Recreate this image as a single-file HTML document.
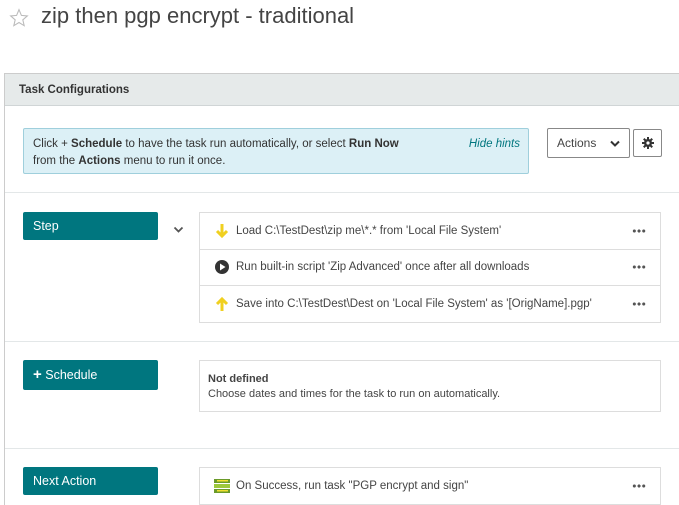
<!DOCTYPE html>
<html style="width:679px;height:505px;overflow:hidden"><head><style>
*{box-sizing:border-box;margin:0;padding:0}
body{width:679px;height:505px;overflow:hidden;background:#fff;font-family:"Liberation Sans",sans-serif;color:#333;position:relative;font-size:12px}
.a{position:absolute}
.btn{position:absolute;left:23px;width:135px;background:#00767f;color:#fff;font-size:12.5px;border-radius:2px;padding-left:10px}
.box{position:absolute;left:199px;width:462px;border:1px solid #ddd;background:#fff}
.row{height:36.5px;display:flex;align-items:center;padding-left:14px;font-size:11.5px;color:#444;position:relative}
.dots{position:absolute;right:14px;top:50%;margin-top:-2px;width:14px;height:4px;background:radial-gradient(circle,#555 1.5px,transparent 1.7px) 0 0/4.7px 4px repeat-x}
.hr{position:absolute;left:5px;width:674px;height:1px;background:#e3e7e8}
</style></head><body>
<svg class="a" style="left:9px;top:8px" width="20" height="20" viewBox="0 0 24 24"><path d="M12 2l2.9 6.9 7.1.6-5.4 4.7 1.6 7-6.2-3.8-6.2 3.8 1.6-7L2 9.5l7.1-.6z" fill="none" stroke="#bbb" stroke-width="1.3"/></svg>
<div class="a" style="left:41px;top:3px;font-size:22px;color:#444">zip then pgp encrypt - traditional</div>
<div class="a" style="left:4px;top:73px;width:675px;height:432px;border-left:1px solid #ccc;border-top:1px solid #ccc"></div>
<div class="a" style="left:5px;top:74px;width:674px;height:32px;background:#e6eaea;border-bottom:1px solid #d0d5d6;font-weight:bold;font-size:11.5px;padding:10px 0 0 14px;color:#333">Task Configurations</div>
<div class="a" style="left:23px;top:128px;width:506px;height:46px;background:#dcf0f6;border:1px solid #9fcfdc;border-radius:2px;padding:7px 0 0 9px;font-size:11.5px;line-height:17px;color:#333">Click + <b>Schedule</b> to have the task run automatically, or select <b>Run Now</b><br>from the <b>Actions</b> menu to run it once.<span class="a" style="right:8px;top:7px;color:#00767f;font-style:italic">Hide hints</span></div>
<div class="a" style="left:547px;top:128px;width:83px;height:30px;border:1px solid #888;border-radius:2px;padding:7px 0 0 9px;font-size:12px;color:#444">Actions <svg style="position:absolute;left:62px;top:11px" width="10" height="8" viewBox="0 0 10 8"><path d="M1 1.5l4 4 4-4" fill="none" stroke="#333" stroke-width="2"/></svg></div>
<div class="a" style="left:633px;top:129px;width:29px;height:28px;border:1px solid #888;border-radius:2px"><svg style="position:absolute;left:8px;top:7px" width="12" height="12" viewBox="0 0 12 12"><g fill="#333"><circle cx="6" cy="6" r="4"/><rect x="5" y="0" width="2" height="12"/><rect x="0" y="5" width="12" height="2"/><rect x="5" y="0" width="2" height="12" transform="rotate(45 6 6)"/><rect x="5" y="0" width="2" height="12" transform="rotate(-45 6 6)"/></g><circle cx="6" cy="6" r="1.6" fill="#fff"/></svg></div>
<div class="hr" style="top:192px"></div>
<div class="btn" style="top:212px;height:28px;line-height:28px">Step</div>
<svg class="a" style="left:173px;top:226px" width="11" height="8" viewBox="0 0 10 8"><path d="M1 1.5l4 4 4-4" fill="none" stroke="#555" stroke-width="1.8"/></svg>
<div class="box" style="top:212px;height:111px">
<div class="row" style="border-bottom:1px solid #ddd"><svg width="16" height="16" viewBox="0 0 16 16" style="margin-right:6px"><path d="M8 1v12M3 8l5 5 5-5" fill="none" stroke="#f0d020" stroke-width="3"/></svg>Load C:\TestDest\zip me\*.* from 'Local File System'<span class="dots"></span></div>
<div class="row" style="border-bottom:1px solid #ddd"><svg width="16" height="16" viewBox="0 0 16 16" style="margin-right:6px"><circle cx="8" cy="8" r="7" fill="#333"/><path d="M6 4.5v7l5.5-3.5z" fill="#fff"/></svg>Run built-in script 'Zip Advanced' once after all downloads<span class="dots"></span></div>
<div class="row"><svg width="16" height="16" viewBox="0 0 16 16" style="margin-right:6px"><path d="M8 15V3M3 8l5-5 5 5" fill="none" stroke="#f0d020" stroke-width="3"/></svg>Save into C:\TestDest\Dest on 'Local File System' as '[OrigName].pgp'<span class="dots"></span></div>
</div>
<div class="hr" style="top:341px"></div>
<div class="btn" style="top:360px;height:30px;line-height:29px"><b style="font-size:15px">+</b>&nbsp;Schedule</div>
<div class="box" style="top:360px;height:52px;padding:11px 0 0 8px;font-size:11px;line-height:15px;color:#444"><b>Not defined</b><br>Choose dates and times for the task to run on automatically.</div>
<div class="hr" style="top:448px"></div>
<div class="btn" style="top:467px;height:28px;line-height:28px">Next Action</div>
<div class="box" style="top:467px;height:38px"><div class="row"><svg width="16" height="14" viewBox="0 0 16 14" style="margin-right:6px"><rect y="0" width="16" height="4" fill="#6a9a2a"/><rect y="5" width="16" height="4" fill="#9dc83c"/><rect y="10" width="16" height="4" fill="#6a9a2a"/><rect x="3" y="1" width="11" height="1.5" fill="#f0e030"/><rect x="3" y="11" width="11" height="1.5" fill="#f0e030"/></svg>On Success, run task "PGP encrypt and sign"<span class="dots"></span></div></div>
</body></html>
